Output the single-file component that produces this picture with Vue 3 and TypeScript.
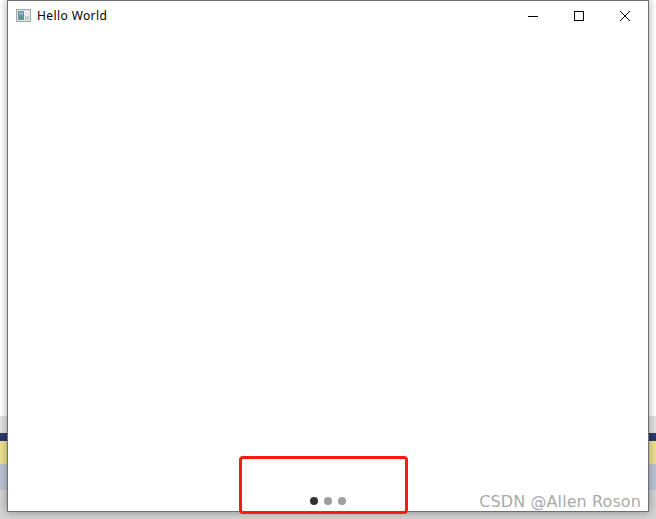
<script setup lang="ts">
const dots: boolean[] = [true, false, false]
</script>

<template>
  <div class="desktop">
    <div class="backdrop">
      <div class="band blank"></div>
      <div class="band pale"></div>
      <div class="band navy"></div>
      <div class="band yellow"></div>
      <div class="band slate"></div>
      <div class="band grey"></div>
    </div>

    <div class="window">
      <header class="titlebar">
        <svg class="app-icon" width="16" height="16" viewBox="0 0 16 16">
          <rect x="0.5" y="1.5" width="14" height="12" fill="#e6e8e8" stroke="#a2a4a6" />
          <rect x="2" y="3" width="6" height="9" fill="#5d979a" />
          <rect x="3" y="4" width="4" height="3" fill="#86aec4" />
          <rect x="9" y="3" width="4" height="4" fill="#e4ecec" />
          <rect x="9" y="8" width="4" height="4" fill="#bcd0ca" />
        </svg>
        <span class="title">Hello World</span>
        <div class="controls">
          <button class="control" aria-label="Minimize">
            <svg width="12" height="12" viewBox="0 0 12 12"><path d="M1 6.5H11" stroke="#000" fill="none" /></svg>
          </button>
          <button class="control" aria-label="Maximize">
            <svg width="12" height="12" viewBox="0 0 12 12"><rect x="1.5" y="1.5" width="9" height="9" stroke="#000" fill="none" /></svg>
          </button>
          <button class="control" aria-label="Close">
            <svg width="12" height="12" viewBox="0 0 12 12"><path d="M1 1L11 11M11 1L1 11" stroke="#000" fill="none" /></svg>
          </button>
        </div>
      </header>
      <main class="content">
        <div class="dots">
          <span v-for="(active, i) in dots" :key="i" class="dot" :class="{ active }"></span>
        </div>
      </main>
    </div>

    <div class="highlight"></div>
    <span class="watermark">CSDN @Allen Roson</span>
  </div>
</template>

<style scoped>
.desktop {
  position: relative;
  width: 656px;
  height: 519px;
  overflow: hidden;
  background: #fff;
  font-family: "Liberation Sans", Arial, sans-serif;
}
.backdrop {
  display: flex;
  flex-direction: column;
  height: 100%;
}
.band { flex: none; }
.blank { height: 416px; background: #fff; }
.pale { height: 17px; background: #e3e3e3; }
.navy { height: 8px; background: #2b3a63; }
.yellow { height: 23px; background: #ece08f; }
.slate { height: 26px; background: #bcc4d4; }
.grey { flex: 1; background: #d2d2d2; }
.window {
  position: absolute;
  left: 7px;
  top: 0;
  width: 642px;
  height: 512px;
  box-sizing: border-box;
  display: flex;
  flex-direction: column;
  background: #fff;
  border: 1px solid #6e6e6e;
  box-shadow: 0 0 8px rgba(0, 0, 0, 0.35);
}
.titlebar {
  display: flex;
  align-items: center;
  height: 30px;
  flex: none;
  padding-left: 8px;
}
.app-icon { flex: none; }
.title {
  margin-left: 5px;
  margin-bottom: 2px;
  font-size: 12px;
  letter-spacing: 0.4px;
  font-family: "Noto Sans", "Liberation Sans", sans-serif;
  color: #000;
}
.controls {
  display: flex;
  margin-left: auto;
}
.control {
  width: 46px;
  height: 30px;
  padding: 0;
  border: 0;
  background: transparent;
  display: flex;
  align-items: center;
  justify-content: center;
}
.content {
  flex: 1;
  display: flex;
  align-items: flex-end;
  justify-content: center;
  padding-bottom: 6px;
}
.dots {
  display: flex;
  gap: 6px;
}
.dot {
  width: 8px;
  height: 8px;
  border-radius: 50%;
  background: #9e9e9e;
}
.dot.active { background: #303030; }
.highlight {
  position: absolute;
  left: 239px;
  top: 456px;
  width: 169px;
  height: 58px;
  box-sizing: border-box;
  border: 3px solid #fb1a10;
  border-radius: 4px;
}
.watermark {
  position: absolute;
  right: 15px;
  top: 492px;
  font-size: 16px;
  letter-spacing: 0.1px;
  font-family: "DejaVu Sans", sans-serif;
  color: rgba(130, 130, 130, 0.7);
}
</style>
